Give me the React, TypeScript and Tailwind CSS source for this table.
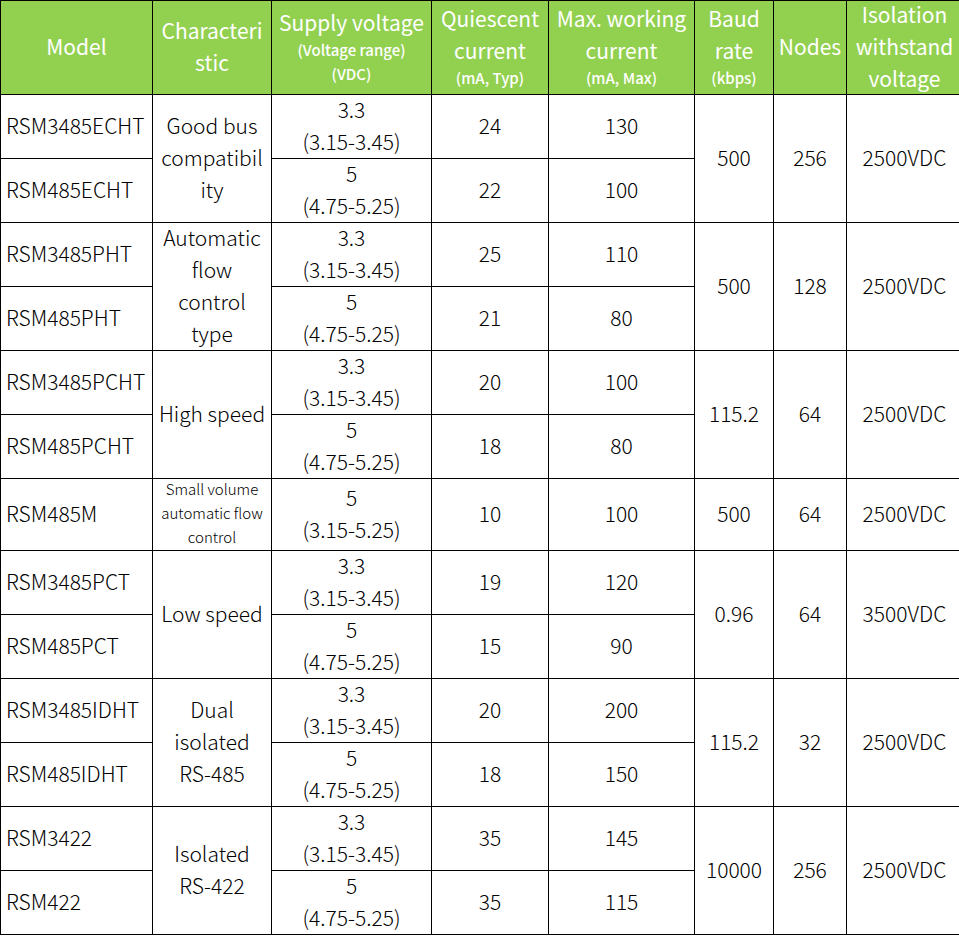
import React from "react";

type Row = { model: string; v: string; vr: string; q: string; m: string };
type Group = {
  rows: Row[];
  ch: string[];
  small?: boolean;
  baud: string;
  nodes: string;
  iso: string;
};

const groups: Group[] = [
  {
    rows: [
      { model: "RSM3485ECHT", v: "3.3", vr: "(3.15-3.45)", q: "24", m: "130" },
      { model: "RSM485ECHT", v: "5", vr: "(4.75-5.25)", q: "22", m: "100" },
    ],
    ch: ["Good bus", "compatibil", "ity"],
    baud: "500",
    nodes: "256",
    iso: "2500VDC",
  },
  {
    rows: [
      { model: "RSM3485PHT", v: "3.3", vr: "(3.15-3.45)", q: "25", m: "110" },
      { model: "RSM485PHT", v: "5", vr: "(4.75-5.25)", q: "21", m: "80" },
    ],
    ch: ["Automatic", "flow", "control", "type"],
    baud: "500",
    nodes: "128",
    iso: "2500VDC",
  },
  {
    rows: [
      { model: "RSM3485PCHT", v: "3.3", vr: "(3.15-3.45)", q: "20", m: "100" },
      { model: "RSM485PCHT", v: "5", vr: "(4.75-5.25)", q: "18", m: "80" },
    ],
    ch: ["High speed"],
    baud: "115.2",
    nodes: "64",
    iso: "2500VDC",
  },
  {
    rows: [{ model: "RSM485M", v: "5", vr: "(3.15-5.25)", q: "10", m: "100" }],
    ch: ["Small volume", "automatic flow", "control"],
    small: true,
    baud: "500",
    nodes: "64",
    iso: "2500VDC",
  },
  {
    rows: [
      { model: "RSM3485PCT", v: "3.3", vr: "(3.15-3.45)", q: "19", m: "120" },
      { model: "RSM485PCT", v: "5", vr: "(4.75-5.25)", q: "15", m: "90" },
    ],
    ch: ["Low speed"],
    baud: "0.96",
    nodes: "64",
    iso: "3500VDC",
  },
  {
    rows: [
      { model: "RSM3485IDHT", v: "3.3", vr: "(3.15-3.45)", q: "20", m: "200" },
      { model: "RSM485IDHT", v: "5", vr: "(4.75-5.25)", q: "18", m: "150" },
    ],
    ch: ["Dual", "isolated", "RS-485"],
    baud: "115.2",
    nodes: "32",
    iso: "2500VDC",
  },
  {
    rows: [
      { model: "RSM3422", v: "3.3", vr: "(3.15-3.45)", q: "35", m: "145" },
      { model: "RSM422", v: "5", vr: "(4.75-5.25)", q: "35", m: "115" },
    ],
    ch: ["Isolated", "RS-422"],
    baud: "10000",
    nodes: "256",
    iso: "2500VDC",
  },
];

const cell =
  "border-r border-b border-black flex flex-col items-center justify-center text-center whitespace-nowrap pb-[3px]";

function Header({ main, sub }: { main: string[]; sub?: string[] }) {
  return (
    <div className={`${cell} bg-[#92d050] text-white`}>
      {main.map((t, i) => (
        <div key={i} className="text-[21px] leading-[32px] font-normal">
          {t}
        </div>
      ))}
      {sub?.map((t, i) => (
        <div key={"s" + i} className="text-[15px] leading-[24px] font-medium">
          {t}
        </div>
      ))}
    </div>
  );
}

export default function App() {
  return (
    <div className="w-[959px] h-[944px] overflow-hidden bg-white">
      <div className="grid grid-cols-[152px_119px_160px_117px_146px_79px_73px_116px] grid-rows-[94px_repeat(6,64px)_72px_repeat(6,64px)] border-t border-l border-black w-max font-['Noto_Sans_CJK_SC',sans-serif] font-light text-black text-[21px] leading-[32px]">
        <Header main={["Model"]} />
        <Header main={["Characteri", "stic"]} />
        <Header main={["Supply voltage"]} sub={["(Voltage range)", "(VDC)"]} />
        <Header main={["Quiescent", "current"]} sub={["(mA, Typ)"]} />
        <Header main={["Max. working", "current"]} sub={["(mA, Max)"]} />
        <Header main={["Baud", "rate"]} sub={["(kbps)"]} />
        <Header main={["Nodes"]} />
        <Header main={["Isolation", "withstand", "voltage"]} />
        {groups.map((g, gi) => {
          const span = g.rows.length === 2 ? "row-span-2" : "";
          return (
            <React.Fragment key={gi}>
              {g.rows.map((r, ri) => (
                <React.Fragment key={ri}>
                  <div className="border-r border-b border-black flex items-center pl-[5px] pb-[3px] whitespace-nowrap">
                    {r.model}
                  </div>
                  {ri === 0 && (
                    <div className={`${cell} ${span}`}>
                      {g.ch.map((t, i) => (
                        <div
                          key={i}
                          className={
                            g.small
                              ? "text-[15px] leading-[24px]"
                              : "text-[21px] leading-[32px]"
                          }
                        >
                          {t}
                        </div>
                      ))}
                    </div>
                  )}
                  <div className={cell}>
                    <div>{r.v}</div>
                    <div>{r.vr}</div>
                  </div>
                  <div className={cell}>{r.q}</div>
                  <div className={cell}>{r.m}</div>
                  {ri === 0 && (
                    <>
                      <div className={`${cell} ${span}`}>{g.baud}</div>
                      <div className={`${cell} ${span}`}>{g.nodes}</div>
                      <div className={`${cell} ${span}`}>{g.iso}</div>
                    </>
                  )}
                </React.Fragment>
              ))}
            </React.Fragment>
          );
        })}
      </div>
    </div>
  );
}
